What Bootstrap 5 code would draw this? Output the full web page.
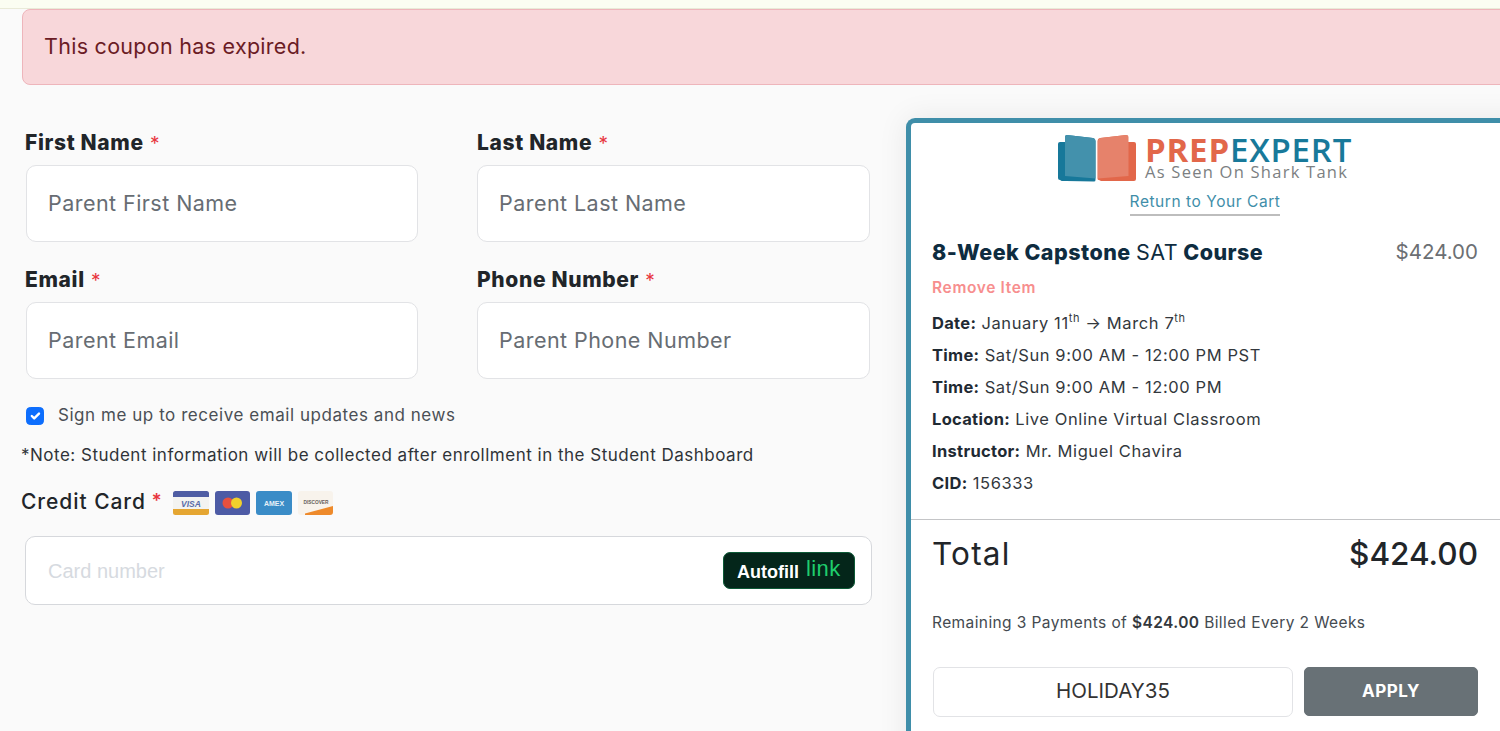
<!DOCTYPE html>
<html lang="en">
<head>
  <meta charset="UTF-8">
  <meta name="viewport" content="width=device-width, initial-scale=1">
  <title>Checkout</title>
  <link href="https://cdn.jsdelivr.net/npm/bootstrap@5.3.0/dist/css/bootstrap.min.css" rel="stylesheet">
  <style>
    html, body { height: 731px; overflow: hidden; }
    body {
      background: #fafafa;
      font-family: Inter, "Open Sans", sans-serif;
      color: #212529;
    }
    .top-strip { height: 9px; background: #fbfdf2; border-bottom: 1px solid #e9ead8; }
    .coupon-alert {
      margin: 0 -20px 0 22px;
      height: 76px;
      padding: 0 21px 2px;
      font-size: 21.5px;
      letter-spacing: .28px;
      color: #6b1c25;
      border-radius: 8px;
      border-color: #eeb5bb;
    }
    .page-cols { padding-top: 33px; }
    .form-side { width: 906px; flex: none; padding: 9px 0 0 21px; }
    .form-fields {
      display: grid;
      grid-template-columns: 392px 393px;
      column-gap: 59px;
      margin-left: 5px;
    }
    .field-label { height: 38px; font-size: 21px; font-weight: 800; letter-spacing: .65px; line-height: 31px; margin: 0; }
    .field-first .field-label { margin-left: -1px; }
    .req { color: #e8363f; font-weight: 400; font-size: 19px; margin-left: 1px; }
    .field-input.form-control {
      height: 77px;
      margin-bottom: 22px;
      padding: 0 21px 2px;
      font-size: 21.5px;
      letter-spacing: .45px;
      border-radius: 10px;
      border-color: #e2e3e6;
    }
    .field-input::placeholder { color: #676d73; }
    .signup { margin: 3px 0 0 5px; padding: 0; min-height: 0; height: 24px; font-size: 17px; letter-spacing: .55px; color: #4a4f55; }
    .signup .form-check-input { float: none; flex: none; margin: 0 14px 0 0; width: 18px; height: 18px; }
    .note-text { margin: 15px 0 0; font-size: 17px; line-height: 24px; letter-spacing: .5px; color: #2f3338; white-space: nowrap; }
    .cc-row { margin-top: 17px; height: 36px; }
    .cc-label { font-size: 21px; font-weight: 500; letter-spacing: .95px; margin-right: 10px; }
    .cc-label .req { position: relative; top: -2px; font-weight: 600; margin-left: -1px; }
    .cc-logos { gap: 6px; margin-top: 2px; }
    .cc-logos svg { display: block; }
    .card-box {
      margin: 16px 0 0 4px;
      width: 847px;
      height: 69px;
      padding: 0 16px 0 22px;
      background: #fff;
      border: 1px solid #d6d8dc;
      border-radius: 10px;
    }
    .card-ph { font-family: "Liberation Sans", Arial, sans-serif; font-size: 20px; color: #d6dae0; }
    .autofill-btn {
      width: 132px;
      height: 37px;
      background: #04261a;
      border: 1px solid #0c5a36;
      border-radius: 7px;
      color: #fff;
      font-family: "Liberation Sans", Arial, sans-serif;
      font-size: 18px;
      font-weight: 700;
      padding: 3px 0 0 13px;
    }
    .autofill-btn .link-word { color: #1fce6d; font-size: 22px; font-weight: 400; margin-left: 7px; line-height: 1; position: relative; top: -3px; letter-spacing: .4px; }

    .cart-panel {
      width: 620px;
      flex: none;
      height: 640px;
      background: #fff;
      border: 5px solid #3f8ea9;
      border-right: 0;
      border-bottom: 0;
      border-radius: 9px 0 0 0;
      box-shadow: 0 0 30px rgba(0, 0, 0, .08);
    }
    .cart-inner { width: 567px; padding: 0 0 0 21px; }
    .brand-row { padding-top: 11px; margin-left: 126px; height: 58px; }
    .brand-text { margin-left: 9px; }
    .brand-name { font-family: "Open Sans", sans-serif; font-size: 33px; line-height: 31px; font-weight: 700; letter-spacing: .8px; height: 30px; white-space: nowrap; }
    .brand-name .c1 { color: #e2674a; }
    .brand-name .c2 { color: #18799a; font-weight: 600; }
    .brand-tag { font-family: "Open Sans", sans-serif; font-size: 16.5px; line-height: 16px; letter-spacing: 1.25px; color: #7c7f82; white-space: nowrap; }
    .return-wrap { margin-top: 8px; text-align: center; }
    .return-link { font-size: 15.5px; line-height: 22px; letter-spacing: .55px; color: #3f8ea9; text-decoration: none; border-bottom: 2px solid #bdbdbd; display: inline-block; padding-bottom: 1px; }
    .course-head { margin-top: 21px; height: 30px; }
    .course-title { font-size: 21.5px; font-weight: 800; color: #0e2c40; letter-spacing: .47px; }
    .course-title span { font-weight: 400; }
    .course-price { font-size: 20.5px; color: #6c6f73; }
    .remove-link { display: block; margin-top: 11px; font-size: 15.5px; line-height: 20px; font-weight: 600; color: #f78e8e; text-decoration: none; letter-spacing: .65px; }
    .detail-list { margin: 9px 0 0; }
    .detail-list > div { height: 32px; line-height: 32px; font-size: 16.5px; letter-spacing: .6px; color: #33383d; white-space: nowrap; }
    .detail-list b { font-weight: 700; color: #1f2a33; letter-spacing: .3px; }
    .detail-list sup { font-size: 11px; top: -.6em; }
    .panel-rule { margin: 20px 0 0 -21px; width: 610px; border: 0; border-top: 1px solid #c4c5c7; opacity: 1; }
    .total-row { margin-top: 14px; height: 40px; font-size: 31.5px; line-height: 40px; color: #212529; }
    .total-lbl { letter-spacing: 1.2px; }
    .total-amt { font-weight: 500; }
    .pay-note { margin: 38px 0 0; font-size: 15.5px; line-height: 22px; letter-spacing: .4px; color: #444a50; white-space: nowrap; }
    .pay-note b { font-weight: 600; color: #33383d; }
    .coupon-row { margin: 33px 0 0 1px; gap: 11px; }
    .coupon-input.form-control { width: 360px; height: 50px; text-align: center; font-size: 20.5px; color: #333; border-radius: 7px; border-color: #e2e3e6; padding-bottom: 9px; }
    .apply-btn.btn { width: 174px; height: 49px; font-size: 17px; font-weight: 700; letter-spacing: .5px; border-radius: 5px; background: #687176; border-color: #687176; }
  </style>
</head>
<body>
  <div class="top-strip"></div>
  <div class="alert alert-danger coupon-alert d-flex align-items-center mb-0">This coupon has expired.</div>

  <div class="d-flex page-cols">
    <div class="form-side">
      <div class="form-fields">
        <div class="field-first">
          <label class="field-label d-block">First Name <span class="req">*</span></label>
          <input type="text" class="form-control field-input" placeholder="Parent First Name">
        </div>
        <div>
          <label class="field-label d-block">Last Name <span class="req">*</span></label>
          <input type="text" class="form-control field-input" placeholder="Parent Last Name">
        </div>
        <div class="field-first">
          <label class="field-label d-block">Email <span class="req">*</span></label>
          <input type="email" class="form-control field-input" placeholder="Parent Email">
        </div>
        <div>
          <label class="field-label d-block">Phone Number <span class="req">*</span></label>
          <input type="text" class="form-control field-input" placeholder="Parent Phone Number">
        </div>
      </div>

      <div class="form-check signup d-flex align-items-center">
        <input class="form-check-input" type="checkbox" id="signup" checked>
        <label class="form-check-label" for="signup">Sign me up to receive email updates and news</label>
      </div>
      <p class="note-text">*Note: Student information will be collected after enrollment in the Student Dashboard</p>

      <div class="d-flex align-items-center cc-row">
        <span class="cc-label">Credit Card <span class="req">*</span></span>
        <div class="d-flex cc-logos">
          <svg width="36" height="24" viewBox="0 0 36 24">
            <rect width="36" height="24" rx="2.5" fill="#f3f3f1"/>
            <path d="M0 6V2.5A2.5 2.5 0 0 1 2.5 0h31A2.5 2.5 0 0 1 36 2.5V6z" fill="#4f5da3"/>
            <path d="M0 18v3.500A2.500 2.500 0 0 0 2.500 24h31a2.500 2.500 0 0 0 2.500-2.500V18z" fill="#e5a632"/>
            <text x="18" y="15.500" text-anchor="middle" font-family="Liberation Sans, sans-serif" font-size="8.500" font-weight="700" font-style="italic" fill="#5a6ca8">VISA</text>
          </svg>
          <svg width="35" height="24" viewBox="0 0 35 24">
            <rect width="35" height="24" rx="3" fill="#4d5ba5"/>
            <circle cx="13" cy="12" r="5.500" fill="#e8503f"/>
            <circle cx="21.500" cy="12" r="5.500" fill="#f0cf2c"/>
          </svg>
          <svg width="36" height="24" viewBox="0 0 36 24">
            <rect width="36" height="24" rx="3" fill="#3a8cc7"/>
            <text x="18" y="14.500" text-anchor="middle" font-family="Liberation Sans, sans-serif" font-size="7" font-weight="700" fill="#e6f1f8">AMEX</text>
          </svg>
          <svg width="35" height="24" viewBox="0 0 35 24">
            <rect width="35" height="24" rx="3" fill="#f8f3ec"/>
            <path d="M7 22.500 35 15v6a3 3 0 0 1-3 3H7z" fill="#ee8a2b"/>
            <text x="18" y="13" text-anchor="middle" font-family="Liberation Sans, sans-serif" font-size="4.800" font-weight="700" fill="#66605a">DISCOVER</text>
          </svg>
        </div>
      </div>

      <div class="card-box d-flex align-items-center justify-content-between">
        <span class="card-ph">Card number</span>
        <button type="button" class="autofill-btn d-flex align-items-center">Autofill<span class="link-word">link</span></button>
      </div>
    </div>

    <div class="cart-panel">
      <div class="cart-inner">
        <div class="d-flex brand-row">
          <svg width="78" height="48" viewBox="0 0 78 48">
            <path d="M2 8h5v38H2a2 2 0 0 1-2-2V10a2 2 0 0 1 2-2z" fill="#17789a"/>
            <path d="M7 3a2 2 0 0 1 2-2l26 3a3 3 0 0 1 2.500 3v39a1.500 1.500 0 0 1-1.500 1.500L8 47H2l5-3z" fill="#17789a"/>
            <path d="M7 3a2 2 0 0 1 2-2l26 3a3 3 0 0 1 2.500 3v37.500L7 42z" fill="#4391ac"/>
            <path d="M74 8h2a2 2 0 0 1 2 2v35a2 2 0 0 1-2 2H43l-2-1a1.500 1.500 0 0 1-1.500-1.500V7a3 3 0 0 1 2.500-3l26-3a2 2 0 0 1 2 2v5z" fill="#e2674a"/>
            <path d="M40 7a3 3 0 0 1 2.500-3l26-3a2 2 0 0 1 2 2v39l-30.500 2.500z" fill="#e6826b"/>
          </svg>
          <div class="brand-text">
            <div class="brand-name"><span class="c1">PREP</span><span class="c2">EXPERT</span></div>
            <div class="brand-tag">As Seen On Shark Tank</div>
          </div>
        </div>
        <div class="return-wrap"><a href="#" class="return-link">Return to Your Cart</a></div>

        <div class="d-flex justify-content-between align-items-center course-head">
          <div class="course-title">8-Week Capstone <span>SAT</span> Course</div>
          <div class="course-price">$424.00</div>
        </div>
        <a href="#" class="remove-link">Remove Item</a>

        <div class="detail-list">
          <div><b>Date:</b> January 11<sup>th</sup> → March 7<sup>th</sup></div>
          <div><b>Time:</b> Sat/Sun 9:00 AM - 12:00 PM PST</div>
          <div><b>Time:</b> Sat/Sun 9:00 AM - 12:00 PM</div>
          <div><b>Location:</b> Live Online Virtual Classroom</div>
          <div><b>Instructor:</b> Mr. Miguel Chavira</div>
          <div><b>CID:</b> 156333</div>
        </div>
        <hr class="panel-rule">

        <div class="d-flex justify-content-between total-row">
          <span class="total-lbl">Total</span>
          <span class="total-amt">$424.00</span>
        </div>
        <p class="pay-note">Remaining 3 Payments of <b>$424.00</b> Billed Every 2 Weeks</p>

        <div class="d-flex coupon-row">
          <input type="text" class="form-control coupon-input" value="HOLIDAY35">
          <button type="button" class="btn btn-secondary apply-btn">APPLY</button>
        </div>
      </div>
    </div>
  </div>
  <script src="https://cdn.jsdelivr.net/npm/bootstrap@5.3.0/dist/js/bootstrap.bundle.min.js"></script>
</body>
</html>
